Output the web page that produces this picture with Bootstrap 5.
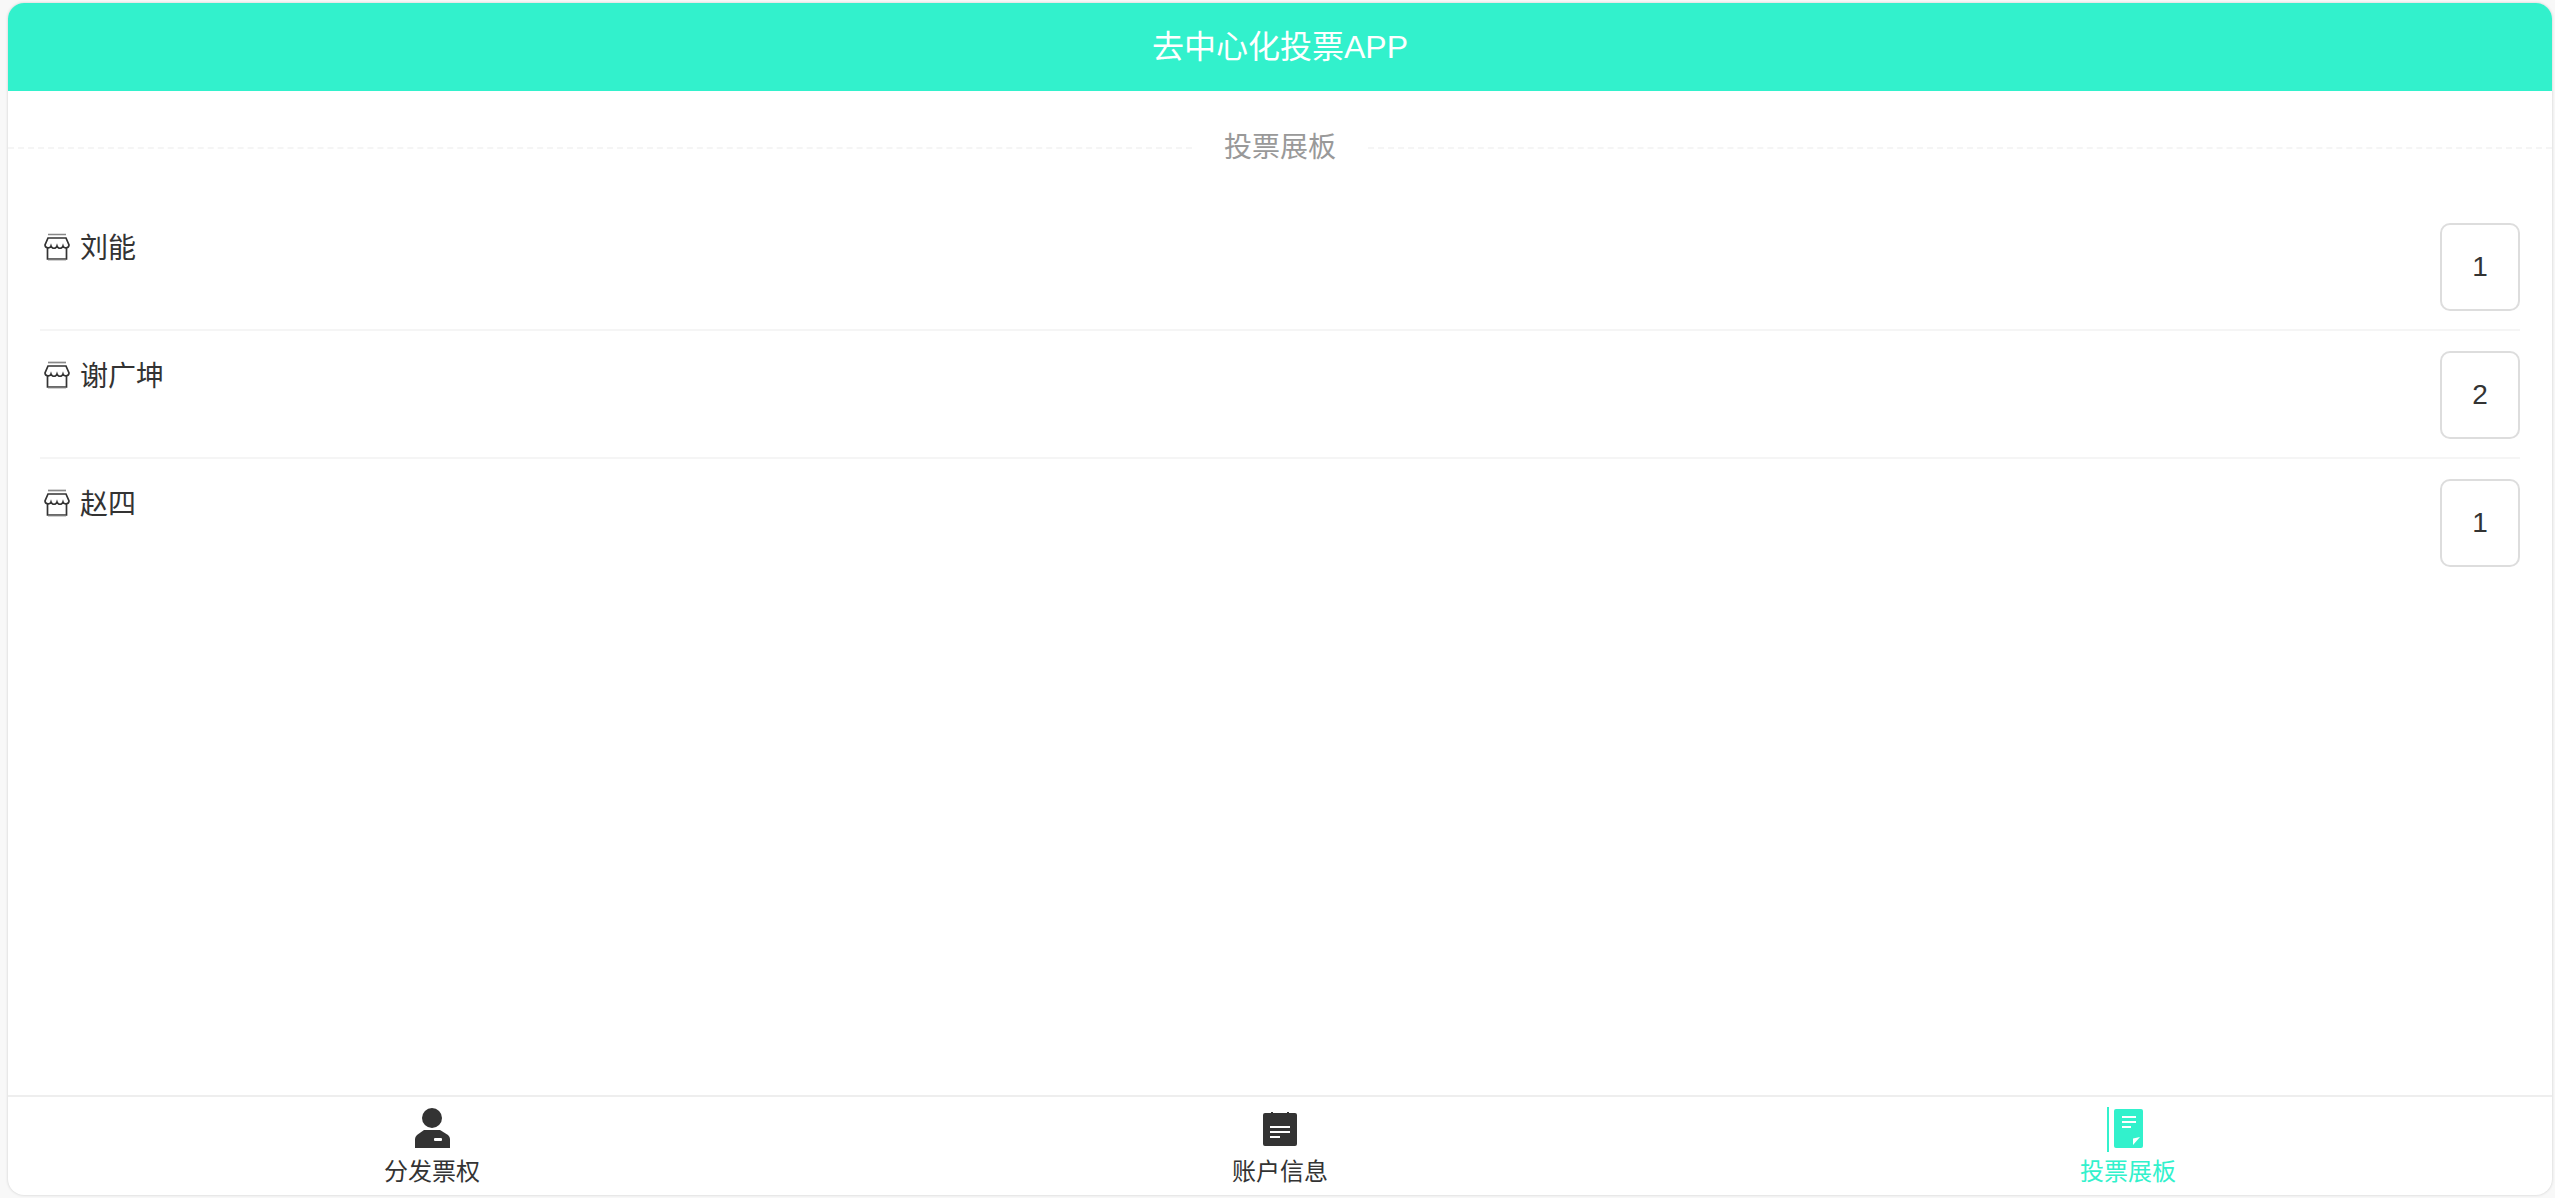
<!DOCTYPE html>
<html lang="zh-CN">
<head>
  <meta charset="UTF-8">
  <title>去中心化投票APP</title>
  <link href="https://cdn.jsdelivr.net/npm/bootstrap@5.3.3/dist/css/bootstrap.min.css" rel="stylesheet">
  <style>
    html, body {
      height: 100%;
    }

    body {
      background: #f8f8f8;
      margin: 0;
      padding: 3px 3px 3px 8px;
      font-family: "Liberation Sans", "Noto Sans CJK SC", sans-serif;
      color: #333;
    }

    .app-shell {
      height: 100%;
      border: 0;
      border-radius: 16px;
      box-shadow: 0 0 3px rgba(0, 0, 0, 0.18);
      overflow: hidden;
      color: #333;
    }

    .app-head {
      height: 88px;
      background: #32f1cc;
      color: #fff;
      font-size: 32px;
    }

    .split-line {
      margin: 36px 0 34px;
      font-size: 28px;
      line-height: 42px;
      color: #999;
    }

    .split-line::before,
    .split-line::after {
      content: "";
      flex: 1;
      border-top: 2px dashed #f5f5f5;
    }

    .split-line span {
      padding: 0 32px;
    }

    .vote-list {
      padding: 0 32px;
    }

    .vote-row {
      padding: 20px 0 18px;
      border-bottom: 2px solid #f5f5f5;
      font-size: 28px;
      line-height: 42px;
    }

    .vote-row:last-child {
      border-bottom: 0;
    }

    .vote-name {
      padding-top: 5px;
      padding-left: 4px;
      gap: 10px;
    }

    .vote-name svg {
      margin-top: -4px;
    }

    .vote-count {
      width: 80px;
      height: 88px;
      border: 2px solid #ddd;
      border-radius: 10px;
    }

    .tab-bar {
      height: 100px;
      border-top: 2px solid #eee;
    }

    .tab-item {
      flex: 1;
      padding-top: 10px;
      font-size: 24px;
      line-height: 36px;
      color: #333;
    }

    .tab-item svg {
      display: block;
      height: 44px;
      width: 44px;
      margin-bottom: 3px;
      overflow: visible;
    }

    .tab-item.is-on {
      color: #32f1cc;
    }
  </style>
</head>
<body>

  <div class="card app-shell d-flex flex-column">
    <div class="app-head d-flex align-items-center justify-content-center">去中心化投票APP</div>

    <div class="flex-grow-1">
      <div class="split-line d-flex align-items-center"><span>投票展板</span></div>

      <div class="vote-list">
        <div class="vote-row d-flex justify-content-between align-items-start">
          <div class="vote-name d-flex align-items-center">
            <svg width="26" height="28" viewBox="0 0 26 28" fill="none" stroke="#333" stroke-width="1.7"><path d="M4 1.5h18" stroke="#888"/><path d="M4 5h18l3 7c0 3-5 4-6 1-1 3-5 3-6 0-1 3-5 3-6 0-1 3-6 2-6-1z"/><path d="M3.500 14v12h19V14"/><path d="M4 26.500h18" stroke="#777"/></svg>
            <span>刘能</span>
          </div>
          <div class="vote-count d-flex align-items-center justify-content-center">1</div>
        </div>
        <div class="vote-row d-flex justify-content-between align-items-start">
          <div class="vote-name d-flex align-items-center">
            <svg width="26" height="28" viewBox="0 0 26 28" fill="none" stroke="#333" stroke-width="1.7"><path d="M4 1.5h18" stroke="#888"/><path d="M4 5h18l3 7c0 3-5 4-6 1-1 3-5 3-6 0-1 3-5 3-6 0-1 3-6 2-6-1z"/><path d="M3.500 14v12h19V14"/><path d="M4 26.500h18" stroke="#777"/></svg>
            <span>谢广坤</span>
          </div>
          <div class="vote-count d-flex align-items-center justify-content-center">2</div>
        </div>
        <div class="vote-row d-flex justify-content-between align-items-start">
          <div class="vote-name d-flex align-items-center">
            <svg width="26" height="28" viewBox="0 0 26 28" fill="none" stroke="#333" stroke-width="1.7"><path d="M4 1.5h18" stroke="#888"/><path d="M4 5h18l3 7c0 3-5 4-6 1-1 3-5 3-6 0-1 3-5 3-6 0-1 3-6 2-6-1z"/><path d="M3.500 14v12h19V14"/><path d="M4 26.500h18" stroke="#777"/></svg>
            <span>赵四</span>
          </div>
          <div class="vote-count d-flex align-items-center justify-content-center">1</div>
        </div>
      </div>
    </div>

    <div class="tab-bar d-flex">
      <div class="tab-item d-flex flex-column align-items-center">
        <svg viewBox="0 0 44 44"><circle cx="22" cy="11" r="10" fill="#333"/><path d="M14 23h16l8 5q2 2 2 4v9H5v-9q0-2 2-4z" fill="#333"/><rect x="24" y="31" width="8" height="3" rx="1" fill="#fff"/></svg>
        <span>分发票权</span>
      </div>
      <div class="tab-item d-flex flex-column align-items-center">
        <svg viewBox="0 0 44 44"><path d="M13 5h2v1h14V5h2v1h6a2 2 0 0 1 2 2v29a2 2 0 0 1-2 2H7a2 2 0 0 1-2-2V8a2 2 0 0 1 2-2h6z" fill="#333"/><path d="M12 20h20M12 25h20M12 30h10" stroke="#fff" stroke-width="2"/></svg>
        <span>账户信息</span>
      </div>
      <div class="tab-item is-on d-flex flex-column align-items-center">
        <svg viewBox="0 0 44 44"><rect x="1" y="0" width="2" height="45" fill="#32f1cc"/><rect x="8" y="2" width="29" height="39" rx="2" fill="#32f1cc"/><path d="M16 10h14M16 15h14M16 20h9" stroke="#fff" stroke-width="2.2"/><path d="M34 30l-7 1.500V38z" fill="#fff"/></svg>
        <span>投票展板</span>
      </div>
    </div>
  </div>

  <script src="https://cdn.jsdelivr.net/npm/bootstrap@5.3.3/dist/js/bootstrap.bundle.min.js"></script>
</body>
</html>
